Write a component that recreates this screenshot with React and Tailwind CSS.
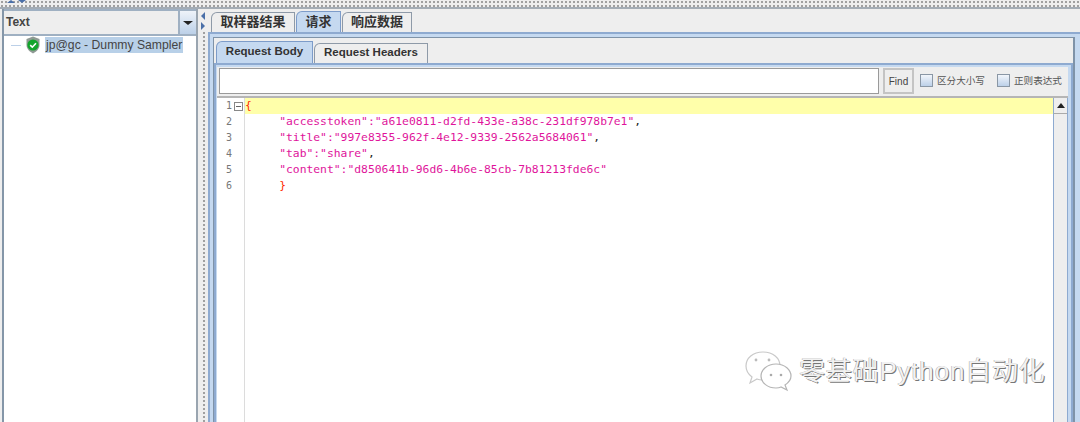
const dots = "bg-[radial-gradient(circle,#9a9a9a_0.7px,transparent_0.8px)] bg-[length:4px_4px]";
const cjk = "font-['Liberation_Sans','Noto_Sans_CJK_SC',sans-serif]";

function ShieldIcon() {
  return (
    <svg width="16" height="18" viewBox="0 0 16 18" className="shrink-0">
      <path d="M8 0.5 L14.5 3 V9 C14.5 13 11 16 8 17.5 C5 16 1.5 13 1.5 9 V3 Z" fill="#8f9a94" />
      <circle cx="8" cy="9" r="5.6" fill="#12a52c" />
      <path d="M5.2 9.2 L7.3 11.2 L11 7.2" fill="none" stroke="#fff" strokeWidth="1.6" />
    </svg>
  );
}

function WeChatIcon() {
  return (
    <svg width="48" height="42" viewBox="0 0 48 42" className="shrink-0">
      <path d="M19 2 C9 2 2 8 2 16 C2 21 4 24 8 27 L6 33 L13 29 C15 30 17 30 19 30 C29 30 36 24 36 16 C36 8 29 2 19 2 Z" fill="#fff" stroke="#c9c9c9" strokeWidth="1.2" />
      <path d="M32 14 C23 14 17 20 17 26 C17 33 24 38 32 38 C34 38 35 38 37 37 L43 40 L41 35 C44 33 47 30 47 26 C47 20 41 14 32 14 Z" fill="#fff" stroke="#b5b5b5" strokeWidth="1.2" />
      <circle cx="12" cy="10" r="1.4" fill="#bbb" />
      <circle cx="25" cy="10" r="1.4" fill="#bbb" />
      <circle cx="27" cy="25" r="1.3" fill="#aaa" />
      <circle cx="37" cy="25" r="1.3" fill="#aaa" />
    </svg>
  );
}

function Tab({ active, children, className }) {
  return (
    <div
      className={`flex items-center justify-center rounded-tl-[6px] border border-b-0 pb-[1px] font-bold text-[#333] ${
        active ? "border-[#7d9cc9] bg-[#c5d9f0]" : "border-[#8e9aa8] bg-[#eeeeee]"
      } ${className}`}
    >
      {children}
    </div>
  );
}

const lines = [
  [<span className="text-[#ff2a00]">{"{"}</span>],
  [<span className="text-[#e0149b]">{'     "accesstoken":"a61e0811-d2fd-433e-a38c-231df978b7e1"'}</span>, ","],
  [<span className="text-[#e0149b]">{'     "title":"997e8355-962f-4e12-9339-2562a5684061"'}</span>, ","],
  [<span className="text-[#e0149b]">{'     "tab":"share"'}</span>, ","],
  [<span className="text-[#e0149b]">{'     "content":"d850641b-96d6-4b6e-85cb-7b81213fde6c"'}</span>],
  [<span className="text-[#ff2a00]">{"     }"}</span>],
];

function Editor() {
  return (
    <div className="relative flex min-h-0 flex-1 border-t-[2px] border-[#b5b5b5] bg-white">
      <div className="w-[28px] shrink-0 border-r border-[#dcdcdc] font-['DejaVu_Sans_Mono',monospace] text-[10px] text-[#777]">
        {lines.map((_, i) => (
          <div key={i} className="flex h-[16px] items-center justify-end pr-[12px] leading-none">
            {i + 1}
          </div>
        ))}
      </div>
      <div className="min-w-0 flex-1 font-['DejaVu_Sans_Mono',monospace] text-[11.35px] text-[#222]">
        {lines.map((l, i) => (
          <div key={i} className={`flex h-[16px] items-center whitespace-pre leading-none ${i === 0 ? "bg-[#ffffaa]" : ""}`}>
            {l}
          </div>
        ))}
      </div>
      <div className="flex w-[15px] shrink-0 flex-col border-x border-[#8eaad0] bg-[#eeeeee]">
        <div className="flex h-[16px] items-center justify-center border-b border-[#aaa]">
          <div className="border-x-[4px] border-b-[5px] border-x-transparent border-b-[#222]" />
        </div>
      </div>
      <div className="absolute left-[17px] top-[4px] flex h-[9px] w-[9px] items-center justify-center border border-[#888] bg-white">
        <div className="h-[1px] w-[5px] bg-[#666]" />
      </div>
      <div className="absolute bottom-[30px] left-[527px] flex items-center">
        <WeChatIcon />
        <span className={`ml-[7px] whitespace-nowrap text-[26px] leading-none tracking-[0.8px] text-[#f2f2f2] [text-shadow:1px_1px_0_#777,-0.5px_-0.5px_0_#aaa] ${cjk}`}>
          零基础Python自动化
        </span>
      </div>
    </div>
  );
}

function Checkbox({ label }) {
  return (
    <div className="flex items-center gap-[4px]">
      <div className="h-[13px] w-[13px] shrink-0 border border-[#8a97a5] bg-gradient-to-b from-[#f2f6fb] to-[#bcd0e8]" />
      <span className={`whitespace-nowrap text-[9.6px] text-[#555] ${cjk}`}>{label}</span>
    </div>
  );
}

export default function App() {
  return (
    <div className="flex h-[422px] w-[1080px] flex-col overflow-hidden bg-[#eeeeee]">
      {/* top strip */}
      <div className={`relative h-[9px] shrink-0 border-b-[2px] border-[#a3acb5] ${dots}`}>
        <div className="absolute left-[7px] top-0 h-0 w-0 border-x-[4px] border-b-[3px] border-x-transparent border-b-[#4a6fa8]" />
        <div className="absolute left-[18px] top-0 h-0 w-0 border-x-[4px] border-t-[3px] border-x-transparent border-t-[#4a6fa8]" />
      </div>

      <div className="flex min-h-0 flex-1">
        {/* left panel */}
        <div className="ml-[2px] flex w-[196px] shrink-0 flex-col border-x-[2px] border-x-[#8496a8] border-r-[#9aa5b0] bg-white">
          <div className="flex h-[27px] shrink-0 border-y-[2px] border-[#9fb0c2] bg-[#eeeeee]">
            <div className="flex flex-1 items-center pb-[2px] pl-[2px] font-['Liberation_Sans',sans-serif] text-[12px] font-bold text-[#444]">
              Text
            </div>
            <div className="flex w-[18px] items-center justify-center border-l-[2px] border-[#9fb0c2] bg-gradient-to-b from-[#eef3f9] to-[#bcd0e8]">
              <div className="border-x-[5px] border-t-[4px] border-x-transparent border-t-[#222]" />
            </div>
          </div>
          <div className="flex h-[18px] items-center pl-[7px]">
            <div className="mr-[4px] h-[1px] w-[10px] bg-[#bcd0e8]" />
            <ShieldIcon />
            <span className="ml-[4px] bg-[#b8d0e8] px-[1px] font-['Liberation_Sans',sans-serif] text-[12.2px] leading-[16px] text-[#444]">
              jp@gc - Dummy Sampler
            </span>
          </div>
        </div>

        {/* splitter */}
        <div className="relative w-[10px] shrink-0">
          <div className="absolute left-[3px] top-[3px] h-0 w-0 border-y-[4px] border-r-[4px] border-y-transparent border-r-[#4a6fa8]" />
          <div className="absolute left-[3px] top-[13px] h-0 w-0 border-y-[4px] border-l-[4px] border-y-transparent border-l-[#4a6fa8]" />
          <div className={`absolute bottom-0 left-[4px] top-[22px] w-[4px] ${dots}`} />
        </div>

        {/* right side */}
        <div className="flex min-w-0 flex-1 flex-col">
          <div className={`flex h-[23px] shrink-0 items-end gap-[1px] pl-[3px] text-[13px] ${cjk}`}>
            <Tab className="h-[20px] w-[84px]">取样器结果</Tab>
            <Tab active className="h-[21px] w-[45px]">请求</Tab>
            <Tab className="h-[20px] w-[70px]">响应数据</Tab>
          </div>

          {/* outer tab panel */}
          <div className="flex min-h-0 flex-1 flex-col border-t-[2px] border-l-[2px] border-[#8eaad0]">
            <div className="flex min-h-0 flex-1 flex-col border-t-[3px] border-r-[5px] border-l-[3px] border-[#c5d9f0]">
              <div className="flex min-h-0 flex-1 flex-col border-t-[1px] border-r-[2px] border-l-[1px] border-[#7f93a8]">
                <div className="flex h-[25px] shrink-0 items-end gap-[1px] pl-[2px] text-[11.5px] font-['Liberation_Sans',sans-serif]">
                  <Tab active className="h-[22px] w-[97px]">Request Body</Tab>
                  <Tab className="h-[20px] w-[114px]">Request Headers</Tab>
                </div>

                {/* inner tab panel */}
                <div className="flex min-h-0 flex-1 flex-col border-t-[2px] border-r-[2px] border-l-[2px] border-[#8eaad0]">
                  <div className="flex min-h-0 flex-1 flex-col border-t-[2px] border-r-[3px] border-l-[1px] border-[#c5d9f0]">
                    <div className="flex h-[29px] shrink-0 items-start pl-[2px] pt-[1px]">
                      <div className="h-[26px] w-[660px] border border-[#9a9a9a] bg-white" />
                      <div className="ml-[4px] flex h-[26px] w-[31px] items-center justify-center border-2 border-[#c4c4c4] font-['Liberation_Sans',sans-serif] text-[10px] text-[#444]">
                        Find
                      </div>
                      <div className="ml-[6px] flex h-[26px] items-center gap-[12px]">
                        <Checkbox label="区分大小写" />
                        <Checkbox label="正则表达式" />
                      </div>
                    </div>
                    <Editor />
                  </div>
                </div>
              </div>
            </div>
          </div>
        </div>
      </div>
    </div>
  );
}
